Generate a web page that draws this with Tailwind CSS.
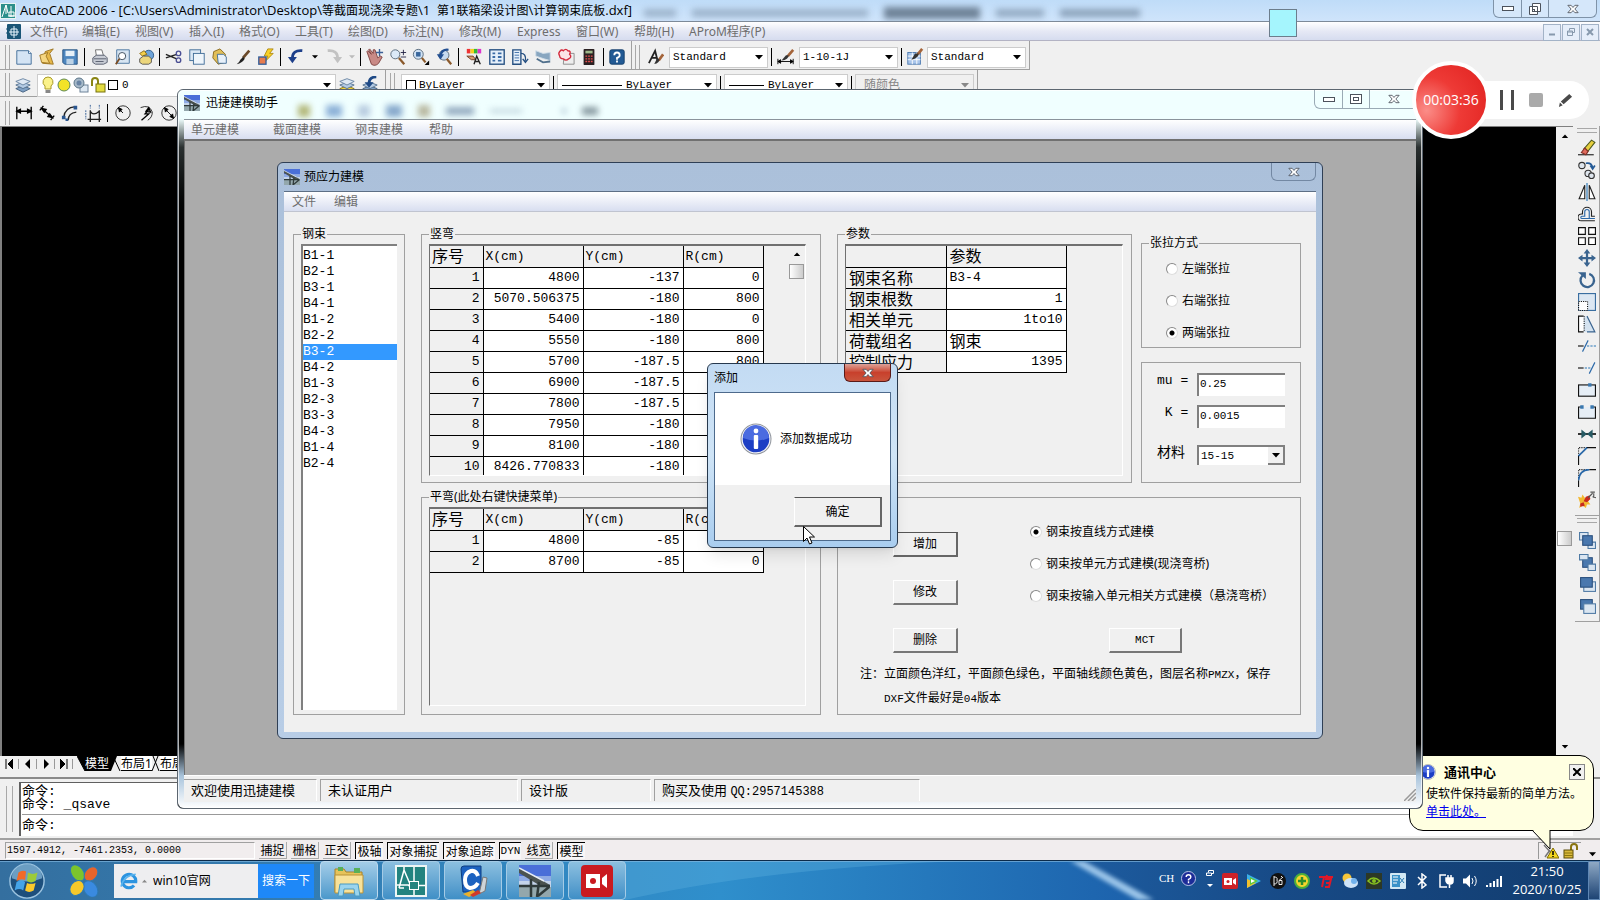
<!DOCTYPE html>
<html lang="zh-CN">
<head>
    <meta charset="UTF-8">
    <meta name="viewport" content="width=device-width, initial-scale=1.0">
    <title>AutoCAD 2006</title>
    <script src="https://cdn.jsdelivr.net/npm/@tailwindcss/browser@4"></script>
</head>
<body class="relative flex flex-col h-screen overflow-hidden bg-[#f0f0f0] text-black text-xs font-['Noto_Sans','Noto_Sans_CJK_SC',sans-serif]">

    <!-- Shared symbols -->
    <svg class="hidden">
        <symbol id="bridge" viewBox="0 0 32 32"><rect width="32" height="32" fill="#c3d3ea"/><rect width="32" height="11" fill="#4a6fd8"/><rect y="11" width="32" height="5" fill="#8fabe4"/><rect y="22" width="32" height="10" fill="#93a7ac"/><path d="M0 3 L24 16 L31 20 L31 23 L20 20 L0 8Z" fill="#4b5350"/><path d="M0 3 L25 16" stroke="#e8eef5" stroke-width="1.5"/><path d="M0 21H31M12 14V32M20 17L18 32M30 22L19 31" stroke="#2f3a3a" stroke-width="2.5" fill="none"/></symbol>
        <symbol id="down" viewBox="0 0 8 5"><path d="M0 0H8L4 4.5Z" fill="currentColor"/></symbol>
        <symbol id="info" viewBox="0 0 32 32"><circle cx="16" cy="16" r="15.5" fill="#8f949c"/><circle cx="16" cy="16" r="14.5" fill="#f4f4f8"/><circle cx="16" cy="16" r="13.3" fill="#1c3ec4"/><path d="M3 15a13 13 0 0 1 26 0Q16 20 3 15Z" fill="#4a6be0"/><circle cx="16" cy="8" r="2.4" fill="#fff"/><rect x="13.8" y="12" width="4.4" height="14" rx="1" fill="#fff"/></symbol>
        <symbol id="layers" viewBox="0 0 20 20"><path d="M2 14l8-3 8 3-8 4Z" fill="#7fa0c4" stroke="#44617f"/><path d="M2 10l8-3 8 3-8 4Z" fill="#b4cbe4" stroke="#54718f"/><path d="M2 6l8-3 8 3-8 4Z" fill="#dfe9f4" stroke="#6481a0"/></symbol>
        <symbol id="closex" viewBox="0 0 14 10"><path d="M1 .7h3.8L7 3.2 9.2.7H13L9.200 5l3.8 4.300H9.200L7 6.800 4.800 9.300H1L4.800 5Z" fill="#fff" stroke="#4c525c"/></symbol>
    </svg>

    <!-- AutoCAD title bar -->
    <header class="flex items-center h-[22px] shrink-0 border-b border-[#7d8a99] bg-gradient-to-b from-[#bfdcf8] to-[#cfe4fb] overflow-hidden">
        <svg class="w-4 h-4 mr-1" viewBox="0 0 16 16"><rect width="16" height="16" fill="#e8f4f3"/><rect x="1" y="1" width="14" height="14" fill="#2b8f8b"/><path d="M2 14L6 2l2 8M6 2v9M8 13h7M11 3v11M9 9h5v4H9z" stroke="#fff" fill="none"/></svg>
        <h1 class="text-[13px] whitespace-pre font-['Open_Sans','Noto_Sans_CJK_SC',sans-serif]">AutoCAD 2006 - [C:\Users\Administrator\Desktop\<span class="text-xs">等截面现浇梁专题</span>\1  <span class="text-xs">第</span>1<span class="text-xs">联箱梁设计图</span>\<span class="text-xs">计算钢束底板</span>.dxf]</h1>
        <div class="flex items-center gap-4 ml-3 pt-1 blur-[3px]">
            <div class="w-8 h-2 bg-[#9db4cc]"></div>
            <div class="w-44 h-2 bg-[#9cb3cb]"></div>
            <div class="w-24 h-3 bg-[#6f8398]"></div>
            <div class="w-12 h-2 bg-[#93aac2]"></div>
            <div class="w-20 h-2 bg-[#8ba2ba]"></div>
        </div>
        <div class="flex self-start ml-auto mr-[3px] h-[18px] border border-t-0 border-[#7f93a8] rounded-b-md bg-[#d5e7fa]">
            <button aria-label="Minimize" class="w-7 flex items-center justify-center border-r border-[#7f93a8]"><svg class="w-3 h-[5px]" viewBox="0 0 12 5"><rect x=".5" y=".5" width="11" height="4" fill="#fff" stroke="#4c525c"/></svg></button>
            <button aria-label="Restore" class="w-[27px] flex items-center justify-center border-r border-[#7f93a8]"><svg class="w-3 h-3" viewBox="0 0 12 12"><path d="M3.500.5h8v8h-8zM.5 3.500h8v8h-8z" fill="#fff" stroke="#4c525c"/><rect x="3.500" y="6.500" width="2" height="2" stroke="#4c525c" fill="none"/></svg></button>
            <button aria-label="Close" class="w-[47px] flex items-center justify-center"><svg class="w-3 h-[10px]"><use href="#closex"/></svg></button>
        </div>
    </header>

    <!-- AutoCAD menu bar -->
    <nav class="flex items-center h-[19px] shrink-0 pl-1.5 pt-0.5 border-b border-[#b3b3c4] bg-gradient-to-b from-white via-[#e6e9f5] to-[#d6dcef] text-[#6d6d6d]">
        <svg class="w-4 h-4 mr-2" viewBox="0 0 16 16"><rect x="1" width="14" height="15" rx="1" fill="#1a5577"/><path d="M8 2v12M3 8h10M5 5h6v6H5z" stroke="#e8f6ff" fill="none"/><path d="M0 5h3M0 9h3" stroke="#1a5577"/></svg>
        <button class="w-[52px] text-left">文件(F)</button>
        <button class="w-[53px] text-left">编辑(E)</button>
        <button class="w-[54px] text-left">视图(V)</button>
        <button class="w-[50px] text-left">插入(I)</button>
        <button class="w-[56px] text-left">格式(O)</button>
        <button class="w-[53px] text-left">工具(T)</button>
        <button class="w-[55px] text-left">绘图(D)</button>
        <button class="w-[56px] text-left">标注(N)</button>
        <button class="w-[58px] text-left">修改(M)</button>
        <button class="w-[59px] text-left">Express</button>
        <button class="w-[58px] text-left">窗口(W)</button>
        <button class="w-[55px] text-left">帮助(H)</button>
        <button class="text-left">AProM程序(P)</button>
        <div class="flex gap-px ml-auto pr-px">
            <button aria-label="Minimize drawing" class="w-[18px] h-[17px] border border-[#a3b3c7] bg-[#e6eefa] flex items-center justify-center"><svg class="w-2 h-2" viewBox="0 0 8 8"><path d="M1 6.500h6" stroke="#8799ad" stroke-width="2"/></svg></button>
            <button aria-label="Restore drawing" class="w-[18px] h-[17px] border border-[#a3b3c7] bg-[#e6eefa] flex items-center justify-center"><svg class="w-2 h-2" viewBox="0 0 8 8"><path d="M2.500 2.500v-2h5v4h-2M.5 3h5v4.500h-5zM.5 4h5" stroke="#8799ad" fill="none"/></svg></button>
            <button aria-label="Close drawing" class="w-[18px] h-[17px] border border-[#a3b3c7] bg-[#e6eefa] flex items-center justify-center"><svg class="w-2 h-2" viewBox="0 0 8 8"><path d="M1 1l6 6M7 1L1 7" stroke="#8799ad" stroke-width="2"/></svg></button>
        </div>
    </nav>

    <!-- Toolbar row 1 -->
    <div class="flex h-[29px] shrink-0">
        <div class="flex items-center w-[632px] pl-[5px] pt-1 border-r border-b border-[#a0a0a0]">
            <div class="w-[5px] h-6 mr-0.5 border-x border-[#a8a8a8]"></div>
            <button aria-label="New" class="w-[23px] flex justify-center"><svg class="w-[18px] h-[18px]" viewBox="0 0 20 20"><path d="M2 3h13l3 3v12H2z" fill="#d4e4f4" stroke="#3c6a96"/><path d="M15 3v3h3" fill="#fff" stroke="#3c6a96"/></svg></button>
            <button aria-label="Open" class="w-[23px] flex justify-center"><svg class="w-[18px] h-[18px]" viewBox="0 0 20 20"><path d="M8 4l9-3-4 5 4 12-12-1Z" fill="#e6b84a" stroke="#9c7420"/><path d="M2 8l9-3-2 4 4 8-9-1Z" fill="#f5d681" stroke="#9c7420"/></svg></button>
            <button aria-label="Save" class="w-[23px] flex justify-center"><svg class="w-[18px] h-[18px]" viewBox="0 0 20 20"><path d="M2 2h16v16H4l-2-2z" fill="#4d86bf" stroke="#24517f"/><rect x="5" y="3" width="10" height="6" fill="#e6f0f8"/><rect x="6" y="12" width="8" height="6" fill="#bcd2e6"/></svg></button>
            <div class="w-px h-[18px] mx-[3px] bg-black"></div>
            <button aria-label="Print" class="w-[23px] flex justify-center"><svg class="w-[18px] h-[18px]" viewBox="0 0 20 20"><path d="M5 2h7l2 7H6z" fill="#fff" stroke="#666"/><path d="M2 11l4-3h9l3 3v5l-4 2H5l-3-2z" fill="#c8ccd4" stroke="#555b6b"/><path d="M3 12h14M5 15h9" stroke="#555b6b"/></svg></button>
            <button aria-label="Preview" class="w-[23px] flex justify-center"><svg class="w-[18px] h-[18px]" viewBox="0 0 20 20"><path d="M3 2h14v15H3z" fill="#d7e5f2" stroke="#46739e"/><circle cx="9" cy="9" r="4" fill="#fff" stroke="#345"/><path d="M6 12l-4 6" stroke="#7a4a20" stroke-width="2"/></svg></button>
            <button aria-label="Publish" class="w-[23px] flex justify-center"><svg class="w-[18px] h-[18px]" viewBox="0 0 20 20"><circle cx="13" cy="8" r="5.500" fill="#6ea3d8" stroke="#2c5a88"/><path d="M3 6l5-3 3 4-5 2z" fill="#f3cf4b" stroke="#8a6a10"/><path d="M3 12l4-3h6l3 3v4l-3 2H6l-3-2z" fill="#ecd67c" stroke="#555"/></svg></button>
            <div class="w-px h-[18px] mx-[2px] bg-black"></div>
            <button aria-label="Cut" class="w-[23px] flex justify-center"><svg class="w-[18px] h-[18px]" viewBox="0 0 20 20"><path d="M1 7l12 5M1 11l12-4" stroke="#222" stroke-width="1.500"/><circle cx="15" cy="6" r="2.500" fill="none" stroke="#4a4f94" stroke-width="1.500"/><circle cx="15" cy="13.500" r="2.500" fill="none" stroke="#4a4f94" stroke-width="1.500"/></svg></button>
            <button aria-label="Copy" class="w-[23px] flex justify-center"><svg class="w-[18px] h-[18px]" viewBox="0 0 20 20"><rect x="2" y="2" width="12" height="12" fill="#dbe8f5" stroke="#3c6a96"/><rect x="6" y="6" width="12" height="12" fill="#eef5fb" stroke="#3c6a96"/></svg></button>
            <button aria-label="Paste" class="w-[23px] flex justify-center"><svg class="w-[18px] h-[18px]" viewBox="0 0 20 20"><path d="M3 4l7-3 6 6-1 9-7 2-6-7z" fill="#e2bf58" stroke="#86651a"/><path d="M7 7h7l3 3v7H8z" fill="#e7f0fa" stroke="#3c6a96"/></svg></button>
            <button aria-label="Brush" class="w-[23px] flex justify-center"><svg class="w-[18px] h-[18px]" viewBox="0 0 20 20"><path d="M17 3l-7 8" stroke="#6b4a2a" stroke-width="3"/><path d="M10 10l2 2q-3 5-9 6 3-2 4-5z" fill="#222"/></svg></button>
            <button aria-label="Match" class="w-[23px] flex justify-center"><svg class="w-[18px] h-[18px]" viewBox="0 0 20 20"><path d="M12 1l-4 8h4l-3 6 9-9h-4l4-5z" fill="#f8d027" stroke="#b08a10"/><rect x="2" y="10" width="8" height="8" fill="#e77c4e" stroke="#34609c" stroke-width="1.500"/></svg></button>
            <div class="w-px h-[18px] mx-[3px] bg-black"></div>
            <button aria-label="Undo" class="w-[23px] flex justify-center"><svg class="w-[18px] h-[18px]" viewBox="0 0 20 20"><path d="M17 3Q6 2 6 11" stroke="#1d3f8a" stroke-width="3" fill="none"/><path d="M1 10h10l-5 7z" fill="#1d3f8a"/></svg></button>
            <button aria-label="Undo list" class="w-[15px] flex justify-center"><svg class="w-1.5 h-1"><use href="#down"/></svg></button>
            <button aria-label="Redo" class="w-[23px] flex justify-center"><svg class="w-[18px] h-[18px]" viewBox="0 0 20 20"><path d="M3 3q11-1 11 8" stroke="#c2c2c2" stroke-width="3" fill="none"/><path d="M9 10h10l-5 7z" fill="#c2c2c2"/></svg></button>
            <button aria-label="Redo list" class="w-[13px] flex justify-center text-[#bbb]"><svg class="w-1.5 h-1"><use href="#down"/></svg></button>
            <div class="w-px h-[18px] mx-[2px] bg-black"></div>
            <button aria-label="Pan" class="w-[23px] flex justify-center"><svg class="w-[18px] h-[18px]" viewBox="0 0 20 20"><path d="M1 4l1-1 4 4-3-5 1-1 4 5 0-4 2 0 2 6 1 3 3-2 2 1-4 7q-4 4-8 1z" fill="#c98a86" stroke="#7c3e3c"/><path d="M15 1v8M11 5h8" stroke="#3c5f96" stroke-width="1.500"/></svg></button>
            <button aria-label="Zoom realtime" class="w-[23px] flex justify-center"><svg class="w-[18px] h-[18px]" viewBox="0 0 20 20"><circle cx="7" cy="7" r="5" fill="#dbe9f7" stroke="#567"/><path d="M11 11l6 7" stroke="#8b5a2c" stroke-width="2.500"/><path d="M13 5h6M16 2v6M13 10h6" stroke="#224"/></svg></button>
            <button aria-label="Zoom window" class="w-[23px] flex justify-center"><svg class="w-[18px] h-[18px]" viewBox="0 0 20 20"><circle cx="7" cy="7" r="5.500" fill="#cfe1f4" stroke="#567"/><rect x="4.500" y="4.500" width="5" height="5" fill="#38669c"/><path d="M11 11l4 5" stroke="#8b5a2c" stroke-width="2.500"/><path d="M19 14v5h-5z"/></svg></button>
            <button aria-label="Zoom previous" class="w-[23px] flex justify-center"><svg class="w-[18px] h-[18px]" viewBox="0 0 20 20"><circle cx="10" cy="8" r="5.500" fill="#c6daf0" stroke="#567"/><path d="M15 2Q8 1 6 8" stroke="#224f92" stroke-width="2.500" fill="none"/><path d="M2 7h8l-4 6z" fill="#224f92"/><path d="M13 12l5 6" stroke="#8b5a2c" stroke-width="2.500"/></svg></button>
            <div class="w-px h-[18px] mx-[3px] bg-black"></div>
            <button aria-label="Properties" class="w-[23px] flex justify-center"><svg class="w-[18px] h-[18px]" viewBox="0 0 20 20"><rect x="2" y="1" width="4" height="5" fill="#e33"/><rect x="6" y="1" width="4" height="5" fill="#f4d020"/><rect x="10" y="1" width="4" height="5" fill="#3b3"/><rect x="14" y="1" width="4" height="5" fill="#d3c"/><path d="M2 9l7 0 3 4-5 0z" fill="#d69a72" stroke="#6c3c22"/><path d="M10 18l3-9 4 9M11 15h5" stroke="#222" fill="none" stroke-width="1.500"/></svg></button>
            <button aria-label="DesignCenter" class="w-[23px] flex justify-center"><svg class="w-[18px] h-[18px]" viewBox="0 0 20 20"><rect x="2" y="2" width="16" height="16" fill="#e6f0fa" stroke="#244e80" stroke-width="1.500"/><path d="M5 5h3v2H5zM5 9h3v2H5zM5 13h3v2H5zM11 5h4v2h-4zM11 9h4v2h-4zM11 13h4v2h-4z" fill="#3a6ba6"/></svg></button>
            <button aria-label="Tool palettes" class="w-[23px] flex justify-center"><svg class="w-[18px] h-[18px]" viewBox="0 0 20 20"><path d="M2 2h9v16H2z" fill="#e6f0fa" stroke="#244e80" stroke-width="1.500"/><path d="M4 5h5M4 8h5M4 11h5M4 14h5" stroke="#3a6ba6"/><path d="M11 6q6 0 5 8M13 12l3 4 3-4" stroke="#244e80" fill="none" stroke-width="1.500"/></svg></button>
            <button aria-label="Sheet sets" class="w-[23px] flex justify-center"><svg class="w-[18px] h-[18px]" viewBox="0 0 20 20"><path d="M2 3l8 3 8-1v9l-7-2-9-3z" fill="#88a6c0" stroke="#cfdde8"/><path d="M3 12l7 4 8-1" stroke="#51708c" stroke-width="2" fill="none"/></svg></button>
            <button aria-label="Markup" class="w-[23px] flex justify-center"><svg class="w-[18px] h-[18px]" viewBox="0 0 20 20"><path d="M8 6h11v12H7z" fill="#eee" stroke="#888"/><path d="M3 4q2-3 4-1 3-3 5 0 4 0 2 4 3 3-1 5-3 3-6 0-4 0-4-3-2-3 0-5z" fill="#fbe4e6" stroke="#d42a3c" stroke-width="1.500"/></svg></button>
            <button aria-label="Calculator" class="w-[23px] flex justify-center"><svg class="w-[18px] h-[18px]" viewBox="0 0 20 20"><rect x="4" y="1" width="12" height="18" rx="1" fill="#2a2022"/><rect x="6" y="3" width="8" height="3" fill="#9fb88a"/><path d="M6 9h2M9 9h2M12 9h2M6 12h2M9 12h2M12 12h2M6 15h2M9 15h2M12 15h2" stroke="#e85050" stroke-width="1.500"/></svg></button>
            <div class="w-px h-[18px] mx-[3px] bg-black"></div>
            <button aria-label="Help" class="w-[20px] flex justify-center"><svg class="w-[18px] h-[18px]" viewBox="0 0 20 20"><rect x="2" y="2" width="16" height="16" rx="2" fill="#225a94" stroke="#123c68"/><path d="M7 8q0-3 3-3t3 3q0 2-3 3v2M10 14v2" stroke="#fff" stroke-width="2" fill="none"/></svg></button>
        </div>
        <div class="flex items-center w-[398px] pl-[3px] pt-1 border-r border-b border-[#a0a0a0]">
            <div class="w-[5px] h-6 mr-2 border-x border-[#a8a8a8]"></div>
            <svg class="w-4 h-[18px] mr-[5px]" viewBox="0 0 18 20"><path d="M1 17L8 3l3 12M4 11h6" stroke="#222" stroke-width="2" fill="none"/><path d="M17 7l-5 7" stroke="#a4643a" stroke-width="3"/><path d="M13 12q0 5-6 6l3-6z" fill="#333"/></svg>
            <label class="flex items-center w-[99px] h-[21px] bg-white border border-[#ccc]"><select aria-label="Text style" class="appearance-none flex-1 min-w-0 pl-[3px] text-[11px] font-['Liberation_Mono',monospace]"><option>Standard</option></select><svg class="w-2 h-[5px] mr-1"><use href="#down"/></svg></label>
            <div class="w-px h-[18px] mx-[3px] bg-black"></div>
            <svg class="w-[18px] h-[18px] ml-0.5 mr-1" viewBox="0 0 20 20"><path d="M1 12v6M18 12v6M1 15h17M1 15l3-2v4zM18 15l-3-2v4z" stroke="#000"/><path d="M18 2l-6 7" stroke="#a4643a" stroke-width="3"/><path d="M13 8q0 5-8 6l5-6z" fill="#333"/></svg>
            <label class="flex items-center w-[99px] h-[21px] bg-white border border-[#ccc]"><select aria-label="Dimension style" class="appearance-none flex-1 min-w-0 pl-[3px] text-[11px] font-['Liberation_Mono',monospace]"><option>1-10-1J</option></select><svg class="w-2 h-[5px] mr-1"><use href="#down"/></svg></label>
            <div class="w-px h-[18px] mx-[3px] bg-black"></div>
            <svg class="w-[18px] h-[18px] ml-px mr-[3px]" viewBox="0 0 20 20"><rect x="2" y="5" width="14" height="13" fill="#a9c5ea" stroke="#4a78ae"/><path d="M2 9h14M2 13h14M7 5v13M12 5v13" stroke="#fff"/><path d="M18 1l-5 6" stroke="#a4643a" stroke-width="3"/><path d="M14 6q0 5-8 7l4-7z" fill="#333"/></svg>
            <label class="flex items-center w-[99px] h-[21px] bg-white border border-[#ccc]"><select aria-label="Table style" class="appearance-none flex-1 min-w-0 pl-[3px] text-[11px] font-['Liberation_Mono',monospace]"><option>Standard</option></select><svg class="w-2 h-[5px] mr-1"><use href="#down"/></svg></label>
        </div>
    </div>

    <!-- Toolbar row 2 -->
    <div class="flex h-[27px] shrink-0">
        <div class="flex items-center w-[386px] pl-[5px] pt-1 border-r border-b border-[#a0a0a0]">
            <div class="w-[5px] h-6 mr-1 border-x border-[#a8a8a8]"></div>
            <svg class="w-[18px] h-[18px] mr-[5px]"><use href="#layers"/></svg>
            <label class="flex items-center w-[299px] h-[23px] pl-0.5 bg-white border border-[#ccc]">
                <svg class="w-4 h-[18px]" viewBox="0 0 16 18"><path d="M8 1a5 5 0 0 1 3 9v3H5v-3a5 5 0 0 1 3-9z" fill="#fbf28a" stroke="#a99b28"/><path d="M5.500 14h5v3h-5z" fill="#888"/></svg>
                <svg class="w-4 h-4" viewBox="0 0 16 16"><circle cx="8" cy="8" r="6" fill="#f2e328" stroke="#5e8a56"/></svg>
                <svg class="w-4 h-4 mx-px" viewBox="0 0 16 16"><rect x="7" y="8" width="8" height="7" fill="#dde8f2" stroke="#6c8298"/><circle cx="6" cy="6" r="5" fill="#a6b9c9" stroke="#5d7688"/><circle cx="6" cy="6" r="2.500" fill="#6884a4"/></svg>
                <svg class="w-4 h-4" viewBox="0 0 16 16"><path d="M2 9V4q0-3 3-3t3 3v3" stroke="#8a8514" stroke-width="2" fill="none"/><rect x="6" y="7" width="9" height="8" fill="#e3dc42" stroke="#77720e"/></svg>
                <span class="w-[10px] h-[10px] ml-0.5 border border-black"></span>
                <select aria-label="Layer" class="appearance-none flex-1 min-w-0 pl-1 text-[11px] font-['Liberation_Mono',monospace]"><option>0</option></select>
                <svg class="w-2 h-[5px] mr-1"><use href="#down"/></svg>
            </label>
            <svg class="w-[18px] h-[18px] ml-0.5 mr-[5px]" viewBox="0 0 20 20"><path d="M2 14l8-3 8 3-8 4Z" fill="#f0d23c" stroke="#8a7614"/><path d="M2 10l8-3 8 3-8 4Z" fill="#b4cbe4" stroke="#54718f"/><path d="M2 6l8-3 8 3-8 4Z" fill="#dfe9f4" stroke="#6481a0"/></svg>
            <svg class="w-[18px] h-[18px]" viewBox="0 0 20 20"><path d="M2 14l8-3 8 3-8 4Z" fill="#7fa0c4" stroke="#44617f"/><path d="M2 10l8-3 8 3-8 4Z" fill="#b4cbe4" stroke="#54718f"/><path d="M17 1Q9 1 9 8" stroke="#1f4a86" stroke-width="3" fill="none"/><path d="M4 7h10l-5 6z" fill="#1f4a86"/></svg>
        </div>
        <div class="flex items-center w-[592px] pl-1 pt-1 border-r border-b border-[#a0a0a0]">
            <div class="w-[5px] h-6 mr-1.5 border-x border-[#a8a8a8]"></div>
            <label class="flex items-center w-[149px] h-[23px] pl-1 bg-white border border-[#ccc]"><span class="w-[10px] h-[10px] border border-black"></span><select aria-label="Color" class="appearance-none flex-1 min-w-0 pl-[3px] text-[11px] font-['Liberation_Mono',monospace]"><option>ByLayer</option></select><svg class="w-2 h-[5px] mr-1"><use href="#down"/></svg></label>
            <div class="w-px h-[18px] mx-[3px] bg-black"></div>
            <label class="flex items-center w-[160px] h-[23px] pl-1 bg-white border border-[#ccc]"><span class="w-[60px] h-px mr-0.5 bg-black"></span><select aria-label="Linetype" class="appearance-none flex-1 min-w-0 pl-0.5 text-[11px] font-['Liberation_Mono',monospace]"><option>ByLayer</option></select><svg class="w-2 h-[5px] mr-1"><use href="#down"/></svg></label>
            <div class="w-px h-[18px] mx-[3px] bg-black"></div>
            <label class="flex items-center w-[124px] h-[23px] pl-1 bg-white border border-[#ccc]"><span class="w-[35px] h-px mr-0.5 bg-black"></span><select aria-label="Lineweight" class="appearance-none flex-1 min-w-0 pl-0.5 text-[11px] font-['Liberation_Mono',monospace]"><option>ByLayer</option></select><svg class="w-2 h-[5px] mr-1"><use href="#down"/></svg></label>
            <div class="w-px h-[18px] mx-[3px] bg-black"></div>
            <label class="flex items-center w-[119px] h-[23px] border border-[#ccc] text-[#888]"><select disabled aria-label="Plot style" class="appearance-none flex-1 min-w-0 pl-2"><option>随颜色</option></select><svg class="w-2 h-[5px] mr-1"><use href="#down"/></svg></label>
        </div>
    </div>

    <!-- Toolbar row 3: dimensions -->
    <div class="flex items-center h-[29px] shrink-0 pl-[5px] pt-0.5">
        <div class="w-[5px] h-6 mr-0.5 border-x border-[#a8a8a8]"></div>
        <button aria-label="Linear" class="w-[23px] flex justify-center"><svg class="w-[18px] h-[18px]" viewBox="0 0 20 20"><path d="M2 3v14M18 3v14M2 8h16M2 8l4-2v4zM18 8l-4-2v4z" stroke="#000" stroke-width="1.500"/></svg></button>
        <button aria-label="Aligned" class="w-[23px] flex justify-center"><svg class="w-[18px] h-[18px]" viewBox="0 0 20 20"><path d="M6 2L2 7M18 13l-4 5M4 5l12 10M4 5l5 1-2 3zM16 15l-5-1 2-3z" stroke="#000" stroke-width="1.500"/></svg></button>
        <button aria-label="Arc length" class="w-[23px] flex justify-center"><svg class="w-[18px] h-[18px]" viewBox="0 0 20 20"><path d="M3 15Q4 4 16 3M8 18q0-8 9-9" stroke="#222" stroke-width="1.500" fill="none"/><path d="M1 13h4v4H1zM14 2h4v4h-4zM5 16h3v3H5z" fill="#2a5690"/></svg></button>
        <button aria-label="Ordinate" class="w-[23px] flex justify-center"><svg class="w-[18px] h-[18px]" viewBox="0 0 20 20"><path d="M7 7v10h10V7M4 17h15M7 8q3 6 10 0M17 17v3M7 17v3" stroke="#222" fill="none" stroke-width="1.500"/><path d="M2 7v10M7 1v4M17 1v4" stroke="#2a5690" stroke-dasharray="2 1"/></svg></button>
        <div class="w-px h-[18px] mx-[3px] bg-black"></div>
        <button aria-label="Radius" class="w-[23px] flex justify-center"><svg class="w-[18px] h-[18px]" viewBox="0 0 20 20"><circle cx="10" cy="10" r="8" fill="none" stroke="#222"/><path d="M10 10L5 5M5 4l4 2-3 3z" stroke="#000"/></svg></button>
        <button aria-label="Jogged" class="w-[23px] flex justify-center"><svg class="w-[18px] h-[18px]" viewBox="0 0 20 20"><path d="M4 4q10-4 13 5 0 6-5 9" stroke="#222" fill="none"/><path d="M14 5L9 11h4l-8 7M13 4l2 5-5-1z" stroke="#000" fill="none" stroke-width="1.500"/></svg></button>
        <button aria-label="Diameter" class="w-[23px] flex justify-center"><svg class="w-[18px] h-[18px]" viewBox="0 0 20 20"><circle cx="10" cy="10" r="8" fill="none" stroke="#222"/><path d="M5 5l10 10M5 4l4 2-3 3zM15 16l-4-2 3-3z" stroke="#000"/></svg></button>
    </div>

    <!-- Drawing area -->
    <main class="flex flex-1 min-h-0">
        <div class="flex flex-col flex-1">
            <div class="flex flex-1 border-t border-l-2 border-[#808080]">
                <div class="flex-1 bg-black"></div>
                <div class="flex flex-col w-[17px] items-center py-[7px]">
                    <svg class="w-2 h-1 rotate-180"><use href="#down"/></svg>
                    <div class="flex-1"></div>
                    <div class="w-[15px] h-[15px] border border-[#999] bg-gradient-to-r from-white to-[#ccc]"></div>
                    <div class="h-[199px]"></div>
                    <svg class="w-2 h-1"><use href="#down"/></svg>
                </div>
            </div>
            <div class="flex items-center h-[15px] mb-1.5">
                <button aria-label="First" class="w-[19px] flex justify-center border-r border-[#999]"><svg class="w-2 h-[10px]" viewBox="0 0 8 10"><path d="M1 0v10M8 0v10L3 5z" stroke="#000"/></svg></button>
                <button aria-label="Previous" class="w-[18px] flex justify-center border-r border-[#999]"><svg class="w-2 h-[10px]" viewBox="0 0 8 10"><path d="M6 0v10L1 5z"/></svg></button>
                <button aria-label="Next" class="w-[18px] flex justify-center border-r border-[#999]"><svg class="w-2 h-[10px]" viewBox="0 0 8 10"><path d="M2 0v10l5-5z"/></svg></button>
                <button aria-label="Last" class="w-[18px] flex justify-center border-r border-[#999]"><svg class="w-2 h-[10px]" viewBox="0 0 8 10"><path d="M7 0v10M0 0v10l5-5z" stroke="#000"/></svg></button>
                <svg class="w-2 h-[15px] ml-1" viewBox="0 0 8 15"><path d="M0 0h8v15z"/><path d="M0 0l8 15" stroke="#000"/></svg>
                <button class="h-[15px] leading-[14px] bg-black text-white">模型</button>
                <svg class="w-3 h-[15px]" viewBox="0 0 12 15"><path d="M0 0h8L2 15H0z"/><path d="M4 0l7 15" stroke="#000" fill="none"/></svg>
                <button class="h-[15px] leading-[13px] bg-white border-b border-black">布局1</button>
                <svg class="w-2 h-[15px]" viewBox="0 0 8 15"><path d="M0 15L6 0M1 0l6 15" stroke="#000" fill="none"/></svg>
                <button class="h-[15px] leading-[13px] bg-white border-b border-black">布局2</button>
            </div>
        </div>
        <aside class="w-[27px] pl-0.5">
            <div class="flex flex-col items-center h-[390px] border-r border-b border-[#a0a0a0]">
                <div class="w-5 h-[5px] mt-0.5 mb-1 border-y border-[#a8a8a8]"></div>
                <button aria-label="Erase" class="h-[22px]"><svg class="w-[18px] h-[18px]" viewBox="0 0 16 16"><path d="M0 14h14" stroke="#222"/><path d="M12 1l3 2-7 9-3-3z" fill="#e7cf3e" stroke="#4c5a20"/><path d="M6 8l3 3-2 3-4-2z" fill="#e06a5c" stroke="#803028"/></svg></button>
                <button aria-label="Copy object" class="h-[22px]"><svg class="w-[18px] h-[18px]" viewBox="0 0 16 16"><g fill="#dfe6ee" stroke="#333"><circle cx="3.500" cy="4" r="2.800"/><circle cx="9" cy="11" r="2.800"/><circle cx="12" cy="13" r="2.500"/></g><path d="M7 2q5-1 6 4M11 4l2 3 2-3" stroke="#245a96" fill="none" stroke-width="1.500"/></svg></button>
                <button aria-label="Mirror" class="h-[22px]"><svg class="w-[18px] h-[18px]" viewBox="0 0 16 16"><path d="M6 2v12H1zM10 2v12h5z" fill="#fff" stroke="#222"/><path d="M8 0v16" stroke="#2a78b8"/></svg></button>
                <button aria-label="Offset" class="h-[22px]"><svg class="w-[18px] h-[18px]" viewBox="0 0 16 16"><path d="M15 14H3a3 3 0 0 1 0-6h1V6a4 4 0 0 1 8 0v4h3" fill="none" stroke="#222"/><path d="M15 12H3.500a1 1 0 0 1 0-2H6V6a2 2 0 0 1 4 0v6" fill="none" stroke="#2a68a8"/></svg></button>
                <button aria-label="Array" class="h-[22px]"><svg class="w-[18px] h-[18px]" viewBox="0 0 16 16"><path d="M.5.5h6v6h-6zM9.500.5h6v6h-6zM.5 9.500h6v6h-6zM9.500 9.500h6v6h-6z" fill="#fff" stroke="#111"/></svg></button>
                <button aria-label="Move" class="h-[22px]"><svg class="w-[18px] h-[18px]" viewBox="0 0 16 16"><path d="M8 2v12M2 8h12" stroke="#3a648f" stroke-width="2"/><path d="M8 0l3 4H5zM8 16l3-4H5zM0 8l4-3v6zM16 8l-4-3v6z" fill="#3a648f"/></svg></button>
                <button aria-label="Rotate" class="h-[22px]"><svg class="w-[18px] h-[18px]" viewBox="0 0 16 16"><path d="M4 4A6 6 0 1 0 10 2.500" stroke="#3a648f" stroke-width="2" fill="none"/><path d="M0 1h7v6z" fill="#3a648f"/></svg></button>
                <button aria-label="Scale" class="h-[22px]"><svg class="w-[18px] h-[18px]" viewBox="0 0 16 16"><rect x=".5" y=".5" width="15" height="15" fill="#dce7f2" stroke="#3a6ea0"/><rect x=".5" y="7.500" width="8" height="8" fill="#fff" stroke="#111" stroke-dasharray="1 1"/></svg></button>
                <button aria-label="Stretch" class="h-[22px]"><svg class="w-[18px] h-[18px]" viewBox="0 0 16 16"><path d="M8 1l7 14H5V1z" fill="#d5e3f0"/><path d="M5 1H.5v14H5" fill="#fff" stroke="#111"/><path d="M5.500 1v14" stroke="#111" stroke-dasharray="1 1"/><path d="M8 1l7 14H8" stroke="#3a648f" fill="none"/></svg></button>
                <button aria-label="Trim" class="h-[22px]"><svg class="w-[18px] h-[18px]" viewBox="0 0 16 16"><path d="M0 8h5" stroke="#111"/><path d="M8 8h8" stroke="#2a78b8" stroke-dasharray="2 1"/><path d="M4 13L9 3" stroke="#2a68a8"/></svg></button>
                <button aria-label="Extend" class="h-[22px]"><svg class="w-[18px] h-[18px]" viewBox="0 0 16 16"><path d="M0 8h5" stroke="#111"/><path d="M6 8h6" stroke="#2a78b8" stroke-dasharray="2 1"/><path d="M10 13l5-10" stroke="#2a68a8"/></svg></button>
                <button aria-label="Break at point" class="h-[22px]"><svg class="w-[18px] h-[18px]" viewBox="0 0 16 16"><rect x=".5" y="3.500" width="15" height="10" fill="#e6eef6" stroke="#111"/><rect x="9" y="2" width="3" height="3" fill="#3a78b0"/></svg></button>
                <button aria-label="Break" class="h-[22px]"><svg class="w-[18px] h-[18px]" viewBox="0 0 16 16"><path d="M3 3.500H.5v10h15v-10H13" fill="#e6eef6" stroke="#111"/><path d="M2 2h3v3H2zM11 2h3v3h-3z" fill="#3a78b0"/></svg></button>
                <button aria-label="Join" class="h-[22px]"><svg class="w-[18px] h-[18px]" viewBox="0 0 16 16"><path d="M0 8h16" stroke="#111" stroke-width="1.500"/><path d="M3 4l5 4-5 4zM13 4L8 8l5 4z" fill="#265a64"/></svg></button>
                <button aria-label="Chamfer" class="h-[22px]"><svg class="w-[18px] h-[18px]" viewBox="0 0 16 16"><path d="M.5 16V8M8 .5h8" stroke="#111"/><path d="M.5 8V.5H8" stroke="#111" stroke-dasharray="1 1" fill="none"/><path d="M.5 8L8 .5" stroke="#2a68a8" stroke-width="1.500"/></svg></button>
                <button aria-label="Fillet" class="h-[22px]"><svg class="w-[18px] h-[18px]" viewBox="0 0 16 16"><path d="M.5 16v-6M10 .5h6" stroke="#111"/><path d="M.5 8V.5H8" stroke="#111" stroke-dasharray="1 1" fill="none"/><path d="M.5 10Q1 1 10 .5" stroke="#2a68a8" stroke-width="1.500" fill="none"/></svg></button>
                <button aria-label="Explode" class="h-[22px]"><svg class="w-[18px] h-[18px]" viewBox="0 0 16 16"><path d="M0 5l3 1 1-3 2 3 5 0-2 3 2 3-3 0-1 3-3-2-3 2 1-4z" fill="#f2b830"/><path d="M7 5l3-1 1 3-3 3-3-1zM2 11l3-1 1 3-4 1z" fill="#c8281e"/><path d="M9 6l4-4M11 1l4 0M13 5l3 1M14 2v4" stroke="#555"/></svg></button>
            </div>
            <div class="flex flex-col items-center h-[106px] border-r border-b border-[#a0a0a0]">
                <div class="w-5 h-[5px] mt-0.5 mb-1.5 border-y border-[#a8a8a8]"></div>
                <button aria-label="Bring to front" class="h-[22px]"><svg class="w-[17px] h-[17px]" viewBox="0 0 16 16"><path d="M.5.5h8v7h-8zM8.500 9.500h7v6h-7z" fill="#dbe6f1" stroke="#4f7aa4"/><rect x="3.500" y="3.500" width="9" height="9" fill="#4a78ae" stroke="#284e7c"/></svg></button>
                <button aria-label="Send to back" class="h-[22px]"><svg class="w-[17px] h-[17px]" viewBox="0 0 16 16"><rect x="3.500" y="3.500" width="9" height="9" fill="#4a78ae" stroke="#284e7c"/><path d="M.5.5h8v5h-8zM8.500 9.500h7v6h-7z" fill="#dbe6f1" stroke="#4f7aa4"/></svg></button>
                <button aria-label="Bring above" class="h-[22px]"><svg class="w-[17px] h-[17px]" viewBox="0 0 16 16"><rect x="4.500" y="5.500" width="11" height="9" fill="#dbe6f1" stroke="#4f7aa4"/><rect x="1.500" y="1.500" width="11" height="9" fill="#4a78ae" stroke="#284e7c"/></svg></button>
                <button aria-label="Send under" class="h-[22px]"><svg class="w-[17px] h-[17px]" viewBox="0 0 16 16"><rect x="1.500" y="1.500" width="11" height="9" fill="#4a78ae" stroke="#284e7c"/><rect x="4.500" y="5.500" width="11" height="9" fill="#dbe6f1" stroke="#4f7aa4"/></svg></button>
            </div>
        </aside>
    </main>

    <!-- Command window -->
    <section class="flex h-[61px] shrink-0 pt-[3px] pb-0.5 border-t-2 border-[#8a8a8a]">
        <div class="w-[7px] mx-1.5 my-1 border-x border-[#a8a8a8] shrink-0"></div>
        <div class="flex flex-col flex-1 pl-px border-l-2 border-t border-[#606060] bg-white text-[13px] leading-[13px] whitespace-pre font-['Liberation_Mono','Noto_Sans_CJK_SC',monospace]">
            <p class="mt-0.5">命令:</p>
            <p>命令: _qsave</p>
            <label class="flex mt-auto pt-1 pb-px border-t border-[#999]">命令:<input type="text" class="flex-1 h-4 outline-none"></label>
        </div>
        <div class="w-[27px]"></div>
    </section>

    <!-- AutoCAD status bar -->
    <footer class="flex items-center h-[22px] shrink-0 pl-[5px] pt-px border-t-2 border-[#a0a0a0] bg-[#f1edee]">
        <div class="w-[250px] h-[17px] pl-px mr-1 border border-[#a0a0a0] border-r-white border-b-white text-[10px] leading-[16px] font-['Liberation_Mono',monospace]">1597.4912, -7461.2353, 0.0000</div>
        <div class="flex gap-1 leading-[15px] text-xs">
            <button class="w-7 h-[17px] border-r border-b border-[#aaa]">捕捉</button>
            <button class="w-7 h-[17px] border-r border-b border-[#aaa]">栅格</button>
            <button class="w-7 h-[17px] border-r border-b border-[#aaa]">正交</button>
            <button class="w-7 h-[17px] border-l border-t border-black bg-[#f8f6f7]">极轴</button>
            <button class="w-[52px] h-[17px] border-l border-t border-black bg-[#f8f6f7]">对象捕捉</button>
            <button class="w-[52px] h-[17px] border-l border-t border-black bg-[#f8f6f7]">对象追踪</button>
            <button class="w-[22px] h-[17px] border-l border-t border-black bg-[#f8f6f7] text-[11px] font-['Liberation_Mono',monospace]">DYN</button>
            <button class="w-7 h-[17px] border-r border-b border-[#aaa]">线宽</button>
            <button class="w-7 h-[17px] border-l border-t border-black bg-[#f8f6f7]">模型</button>
        </div>
        <div class="flex items-center gap-2 ml-auto mr-1">
            <div class="flex gap-1 w-[43px] pl-1 border-l border-t border-[#999]">
                <svg class="w-4 h-4" viewBox="0 0 16 16"><path d="M1 2l8 9M2 14l5-7" stroke="#777" stroke-width="1.500"/><path d="M10 5l6 10H4z" fill="#f4d820" stroke="#806c00"/><path d="M10 8v4M10 13v1" stroke="#000" stroke-width="1.500"/></svg>
                <svg class="w-4 h-4" viewBox="0 0 16 16"><path d="M8 7V4q0-3 3-3t3 3v3" stroke="#8a7410" stroke-width="2" fill="none"/><rect x="1" y="7" width="9" height="8" fill="#d8b83a" stroke="#5c4c08"/><path d="M1 10h9M1 12.500h9" stroke="#8a7410"/></svg>
            </div>
            <svg class="w-[7px] h-[5px] mt-2"><use href="#down"/></svg>
        </div>
    </footer>

    <!-- Taskbar -->
    <footer class="relative flex items-center h-10 shrink-0 border-t border-[#0c2b4a] bg-gradient-to-r from-[#346f9f] from-0% via-[#2f8fcc] via-45% to-[#1d63ad] to-70%">
        <svg class="absolute inset-0 w-full h-full" viewBox="0 0 1600 39" preserveAspectRatio="none">
            <defs><linearGradient id="dark" x1="0" x2="1"><stop offset="0" stop-color="#1d5ca0"/><stop offset=".4" stop-color="#174a86"/><stop offset="1" stop-color="#123c6e"/></linearGradient></defs>
            <path d="M1076 0H1600V39H1144Z" fill="url(#dark)"/>
            <path d="M1070 0h14L1154 39h-16Z" fill="#9cc6ea" class="blur-[2px]"/>
            <path d="M625 39Q760 8 960 0H625Z" fill="#5fb2e0" opacity=".35"/>
            <path d="M0 .5H1600" stroke="#7fb6df" opacity=".7"/>
        </svg>
        <div class="relative flex items-center flex-1 h-full">
            <button aria-label="Start" class="w-[54px] flex justify-center"><svg class="w-[38px] h-[38px]" viewBox="0 0 40 40"><circle cx="20" cy="20" r="18" fill="#1d4f7c" stroke="#9cc4e0" stroke-width="1.500"/><path d="M4 17a16 15 0 0 1 32 0Q20 24 4 17Z" fill="#7fb1d4" opacity=".8"/><path d="M11 11q4-3 8-1l-1 9q-4-2-9 1z" fill="#f06a28"/><path d="M21 11q5 3 10 0l-2 9q-5 3-9 0z" fill="#9ccb3a"/><path d="M9 21q5-3 9 0l-2 9q-4-3-9 0z" fill="#45a4e8"/><path d="M20 22q4 2 9 0l-2 8q-5 3-9 0z" fill="#fbc92c"/></svg></button>
            <button aria-label="Browser" class="w-[60px] flex justify-center"><svg class="w-8 h-8" viewBox="0 0 32 32"><g stroke="#2c79b4"><ellipse cx="9.500" cy="8" rx="6" ry="9" transform="rotate(-35 9.500 8)" fill="#7cc42c"/><ellipse cx="23" cy="9" rx="8" ry="6" transform="rotate(-50 23 9)" fill="#e8642c"/><ellipse cx="22.500" cy="24" rx="6.500" ry="9" transform="rotate(-35 22.500 24)" fill="#3a8ae0"/><ellipse cx="9" cy="23" rx="8" ry="6.500" transform="rotate(-50 9 23)" fill="#f6c82a"/></g></svg></button>
            <form class="flex w-[200px] h-[34px] bg-[#eeeef0]">
                <div class="flex items-center pl-1.5"><svg class="w-[18px] h-[18px] mr-1" viewBox="0 0 16 16"><path d="M3 8.500h11A6 6 0 1 0 12.500 12" fill="none" stroke="#2c94e0" stroke-width="2.800"/><path d="M1 13Q3 3 14 2" stroke="#5ab4ee" stroke-width="1.500" fill="none"/></svg><svg class="w-[5px] h-[4px] mr-1 rotate-180 text-[#888]"><use href="#down"/></svg></div>
                <input type="text" aria-label="Search" value="win10官网" class="flex-1 min-w-0 pl-0.5 text-xs outline-none">
                <button type="button" class="w-14 bg-[#1e88f8] text-white">搜索一下</button>
            </form>
            <div class="flex gap-1 h-full ml-1.5">
                <button aria-label="Explorer" class="w-[58px] flex items-center justify-center border border-[#bcd9ee] rounded-sm bg-gradient-to-b from-[#a3cde8] to-[#4a98cb]"><svg class="w-8 h-8" viewBox="0 0 32 32"><path d="M2 4h9l2 3h16v20H2z" fill="#e6c35a" stroke="#a88228"/><path d="M5 2h5v4H5zM21 3h6v5h-6z" fill="#58b058"/><path d="M2 10h28v18H2z" fill="#f8e29a" stroke="#b89238"/><path d="M5 31l2-12h18l2 12h-5l-1-7H11l-1 7z" fill="#9ad4ee" stroke="#4a9ac0"/></svg></button>
                <button aria-label="AutoCAD" class="w-[58px] flex items-center justify-center border border-[#a4cbe6] rounded-sm bg-gradient-to-b from-[#8cc0e0] to-[#3f8fc6]"><svg class="w-8 h-8" viewBox="0 0 32 32"><rect width="32" height="32" fill="#eef6f5"/><rect x="2" y="2" width="28" height="28" fill="#23837f"/><path d="M4 23L9 5l6 14M4 23h5M9 5V2M15 20H2M19 17v-15M19 24v6M13 20.500h17" stroke="#fff" fill="none" stroke-width="1.500"/><rect x="14.500" y="16.500" width="9" height="8" fill="#23837f" stroke="#fff"/></svg></button>
                <button aria-label="Civil" class="w-[58px] flex items-center justify-center border border-[#a4cbe6] rounded-sm bg-gradient-to-b from-[#8cc0e0] to-[#3f8fc6]"><svg class="w-8 h-8" viewBox="0 0 32 32"><path d="M4 4q0-3 3-3h17v26H6z" fill="#1c62c0" stroke="#0d3d80"/><path d="M21 11Q19 5 14 6q-6 2-6 9t5 8q5 0 8-5" stroke="#fff" stroke-width="4" fill="none"/><path d="M26 12l4 1-2 13-6 3z" fill="#cfd4d8" stroke="#777"/><path d="M6 29l10-4 4 3-8 4z" fill="#e9b02c"/><path d="M13 30l8-5 3 3-8 4z" fill="#d03a2c"/></svg></button>
                <button aria-label="Bridge" class="w-[58px] flex items-center justify-center border border-[#a4cbe6] rounded-sm bg-gradient-to-b from-[#8cc0e0] to-[#3f8fc6]"><svg class="w-8 h-8"><use href="#bridge"/></svg></button>
                <button aria-label="Recorder" class="w-[58px] flex items-center justify-center border border-[#a4cbe6] rounded-sm bg-gradient-to-b from-[#8cc0e0] to-[#3f8fc6]"><svg class="w-8 h-8" viewBox="0 0 32 32"><rect width="32" height="32" rx="4" fill="#c91a20"/><path d="M5 9h14v14H5zM21 13l5-4v14l-5-4z" fill="#fff"/><circle cx="12" cy="16" r="3" fill="#c91a20"/></svg></button>
            </div>
            <div class="flex items-center h-full ml-auto text-white">
                <span class="w-[18px] mb-1 text-[11px] font-['Liberation_Serif',serif]">CH</span>
                <svg class="w-[15px] h-[15px] mb-1 ml-1" viewBox="0 0 16 16"><circle cx="8" cy="8" r="7.500" fill="#1c2c98" stroke="#c0c8e8"/><path d="M5.500 6.500q0-2.500 2.500-2.500t2.500 2.500q0 1.500-2.500 2.500v1M8 11v2" stroke="#fff" stroke-width="1.500" fill="none"/></svg>
                <svg class="w-2 h-5 mb-1 ml-[10px] mr-2" viewBox="0 0 8 20"><path d="M2.500 3.500v-2h5v3h-2M.5 4h5v2.500h-5z" stroke="#fff" fill="none"/><path d="M1 15h6l-3 3z" fill="#fff"/></svg>
                <div class="flex items-center gap-2">
                    <svg class="w-4 h-4" viewBox="0 0 16 16"><rect width="16" height="16" rx="2" fill="#cc2228"/><path d="M2 5h8v7H2zM11 7l3-2v7l-3-2z" fill="#fff"/><circle cx="6" cy="8.500" r="1.500" fill="#cc2228"/></svg>
                    <svg class="w-4 h-4" viewBox="0 0 16 16"><path d="M1 1l14 7-14 7z" fill="#3ab0e8"/><path d="M1 6v9l9-5z" fill="#f4c02c"/><path d="M4 4l8 4-8 4z" fill="#5cc83c"/><path d="M5 6l4 2-4 2z" fill="#fff"/></svg>
                    <svg class="w-4 h-4" viewBox="0 0 16 16"><circle cx="8" cy="8" r="8" fill="#111"/><path d="M4 3v10M4 4q4 0 3 3 1 4-3 4M13 4L9 7.500h3v4H9v-4M11 3l2 2" stroke="#e8e8e8" fill="none"/></svg>
                    <svg class="w-4 h-4" viewBox="0 0 16 16"><circle cx="8" cy="8" r="7" fill="#f6d42c" stroke="#4caf3c" stroke-width="2"/><path d="M8 4v8M4 8h8" stroke="#2c8c2c" stroke-width="2.500"/></svg>
                    <svg class="w-4 h-4" viewBox="0 0 16 16"><path d="M1 4h14M6 4L4 14M9 2L8 6h5l-2 8H7M8 10h4" stroke="#e01828" stroke-width="2" fill="none"/></svg>
                    <svg class="w-4 h-4" viewBox="0 0 16 16"><circle cx="5" cy="5" r="4.500" fill="#f6c63a"/><ellipse cx="9" cy="10" rx="7" ry="5" fill="#cfe4f8"/><circle cx="12" cy="8" r="3" fill="#72b2ec"/></svg>
                    <svg class="w-4 h-4" viewBox="0 0 16 16"><rect width="16" height="16" fill="#2c3826"/><path d="M2 8q5-6 12 0-6 6-12 0z" fill="none" stroke="#86c020" stroke-width="1.500"/><circle cx="8" cy="8" r="2" fill="#86c020"/></svg>
                    <svg class="w-4 h-4" viewBox="0 0 16 16"><rect width="16" height="16" rx="1" fill="#d2e8f4"/><rect x="2" y="2" width="8" height="12" fill="#3a92c8"/><path d="M3 4h5M3 7h5M3 10h4" stroke="#fff"/><path d="M10 5l4 5M14 5l-4 5" stroke="#2a7ab0"/></svg>
                    <svg class="w-4 h-4" viewBox="0 0 16 16"><path d="M4 4l8 8-4 3V1l4 3-8 8" stroke="#fff" stroke-width="1.500" fill="none"/></svg>
                    <svg class="w-4 h-4" viewBox="0 0 16 16"><path d="M8 2H2v12h7" stroke="#fff" stroke-width="1.500" fill="none"/><path d="M8 5h7v3q0 3-3 3t-4-3zM10 2v3M13 2v3M11.500 11v4" stroke="#fff" stroke-width="1.500" fill="#fff"/></svg>
                    <svg class="w-4 h-4" viewBox="0 0 16 16"><path d="M1 5.500h3l4-4v13l-4-4H1z" fill="#fff"/><path d="M10 5q2 3 0 6M12.500 3q3.500 5 0 10" stroke="#fff" fill="none"/></svg>
                    <svg class="w-4 h-4" viewBox="0 0 16 16"><path d="M1 14v-2M4.500 14v-4M8 14V8M11.500 14V6M15 14V3" stroke="#fff" stroke-width="2"/></svg>
                </div>
                <div class="w-[82px] ml-1 pb-0.5 text-center text-[13px] leading-[18px] font-['Open_Sans',sans-serif]">
                    <p>21:50</p>
                    <p>2020/10/25</p>
                </div>
                <button aria-label="Show desktop" class="w-3 h-full border border-[#5f87b4] bg-gradient-to-b from-[#8fa9c4] to-[#1d4474]"></button>
            </div>
        </div>
    </footer>

    <!-- Balloon of the communication center -->
    <div class="absolute right-[6px] bottom-[69px] w-[185px] h-[76px] pt-1.5 pl-4 pr-2 border border-black rounded-[14px] bg-[#ffffe1]">
        <div class="flex items-center">
            <svg class="w-4 h-4 -ml-1.5 mr-2"><use href="#info"/></svg>
            <h2 class="text-[13px] leading-[20px] font-bold">通讯中心</h2>
            <button aria-label="Close balloon" class="flex items-center justify-center w-4 h-4 ml-auto bg-[#f0f0f0] border border-[#888]"><svg class="w-2 h-2" viewBox="0 0 8 8"><path d="M0 0l8 8M8 0L0 8" stroke="#000" stroke-width="2"/></svg></button>
        </div>
        <p class="mt-0.5 whitespace-nowrap leading-[20px]">使软件保持最新的简单方法。</p>
        <a href="#" class="leading-4 text-[#0000ee] underline">单击此处。</a>
        <svg class="absolute right-[40px] top-[73px] w-[24px] h-[22px]" viewBox="0 0 24 22"><path d="M3 0l18 20V0" fill="#ffffe1"/><path d="M3 1l18 19V1" fill="none" stroke="#000"/></svg>
    </div>

    <!-- Modelling assistant window -->
    <section class="absolute left-[177px] right-[177px] top-[89px] bottom-[91px] flex flex-col px-1.5 pb-1.5 border border-[#5c6670] rounded-md bg-gradient-to-b from-[#f0ffff] from-4% via-[#2a3030] via-8% to-black to-20%">
        <div class="absolute inset-x-0 bottom-0 h-16 rounded-b-md bg-gradient-to-b from-transparent via-[#a9c4dc] via-50% to-white"></div>
        <div class="absolute inset-0 rounded-md border border-white/70"></div>
        <header class="relative flex items-center h-[29px] pb-1 shrink-0">
            <svg class="w-4 h-4 mr-1.5"><use href="#bridge"/></svg>
            <h2 class="text-xs">迅捷建模助手</h2>
            <div class="flex items-center gap-4 ml-5 mt-4 blur-[3px]">
                <div class="w-3 h-3 bg-[#b3b87a]"></div><div class="w-4 h-3 bg-[#8db2d8]"></div><div class="w-3 h-3 bg-[#b8cce0]"></div><div class="w-4 h-3 bg-[#87a9cc]"></div><div class="w-3 h-3 bg-[#b8b8a0]"></div><div class="w-7 h-2 bg-[#92aabf]"></div><div class="w-8 h-1 bg-[#c0d4dd]"></div><div class="w-1 h-1 ml-6 bg-[#92aabf]"></div><div class="w-4 h-2 bg-[#86989f]"></div>
            </div>
            <div class="flex self-start ml-auto -mr-0.5 h-[19px] border border-t-0 border-[#9aaab5] rounded-bl-md">
                <button aria-label="Minimize" class="w-7 flex items-center justify-center border-r border-[#9aaab5]"><svg class="w-3 h-[5px]" viewBox="0 0 12 5"><rect x=".5" y=".5" width="11" height="4" fill="#fff" stroke="#4c525c"/></svg></button>
                <button aria-label="Maximize" class="w-[27px] flex items-center justify-center border-r border-[#9aaab5]"><svg class="w-3 h-[10px]" viewBox="0 0 12 10"><rect x=".5" y=".5" width="11" height="9" fill="#fff" stroke="#4c525c"/><rect x="3.500" y="3.500" width="5" height="3" fill="none" stroke="#4c525c"/></svg></button>
                <button aria-label="Close" class="w-[47px] flex items-center justify-center"><svg class="w-3 h-[10px]"><use href="#closex"/></svg></button>
            </div>
        </header>
        <nav class="relative flex items-center h-[20px] shrink-0 pl-[7px] border-t border-[#8a949c] bg-gradient-to-b from-white to-[#d8def0] text-[#6d6d6d]">
            <button class="w-[82px] text-left">单元建模</button>
            <button class="w-[82px] text-left">截面建模</button>
            <button class="w-[74px] text-left">钢束建模</button>
            <button class="text-left">帮助</button>
        </nav>

        <!-- MDI area -->
        <div class="relative flex-1 border-t-2 border-l border-[#707070] bg-[#ababab]">

            <!-- Prestress dialog -->
            <section class="absolute left-[92px] right-[93px] top-[21px] bottom-[36px] flex flex-col px-1.5 pb-1.5 border border-[#2f3f55] rounded-md bg-gradient-to-b from-[#abc0da] to-[#b8cde6]">
                <header class="flex items-center h-[28px] shrink-0">
                    <svg class="w-4 h-4 mr-1"><use href="#bridge"/></svg>
                    <h2 class="text-xs">预应力建模</h2>
                    <button aria-label="Close" class="flex items-center justify-center self-start w-[45px] h-[18px] ml-auto border border-t-0 border-[#7388a3] rounded-b-md"><svg class="w-3 h-[10px]"><use href="#closex"/></svg></button>
                </header>
                <nav class="flex items-center h-[20px] shrink-0 pl-2 gap-[18px] border-t border-[#5d6f85] bg-gradient-to-b from-white to-[#d8def0] text-[#6d6d6d]">
                    <button>文件</button>
                    <button>编辑</button>
                </nav>
                <div class="flex-1 grid grid-cols-[112px_400fr_464fr] gap-4 pl-[9px] pr-[15px] pt-[15px] pb-[17px] border-t border-[#c0c4d0] bg-[#f0f0f0]">
                    <fieldset class="flex flex-col px-[7px] pb-1 border border-[#a0a0a0]">
                        <legend class="px-px leading-[14px]">钢束</legend>
                        <select size="28" aria-label="钢束" class="w-full h-full mt-[3px] pt-0.5 border-t-2 border-l-2 border-[#808080] bg-white text-[13px] overflow-hidden outline-none font-['Liberation_Mono',monospace]">
                            <option class="h-4 min-h-4 p-0 leading-4">B1-1</option>
                            <option class="h-4 min-h-4 p-0 leading-4">B2-1</option>
                            <option class="h-4 min-h-4 p-0 leading-4">B3-1</option>
                            <option class="h-4 min-h-4 p-0 leading-4">B4-1</option>
                            <option class="h-4 min-h-4 p-0 leading-4">B1-2</option>
                            <option class="h-4 min-h-4 p-0 leading-4">B2-2</option>
                            <option class="h-4 min-h-4 p-0 leading-4 bg-[linear-gradient(#3399ff,#3399ff)] text-white" selected>B3-2</option>
                            <option class="h-4 min-h-4 p-0 leading-4">B4-2</option>
                            <option class="h-4 min-h-4 p-0 leading-4">B1-3</option>
                            <option class="h-4 min-h-4 p-0 leading-4">B2-3</option>
                            <option class="h-4 min-h-4 p-0 leading-4">B3-3</option>
                            <option class="h-4 min-h-4 p-0 leading-4">B4-3</option>
                            <option class="h-4 min-h-4 p-0 leading-4">B1-4</option>
                            <option class="h-4 min-h-4 p-0 leading-4">B2-4</option>
                        </select>
                    </fieldset>

                    <div class="flex flex-col gap-[7px]">
                        <fieldset class="pl-[7px] pr-[14px] pb-1.5 border border-[#a0a0a0]">
                            <legend class="px-px leading-[14px]">竖弯</legend>
                            <div class="flex justify-between h-[232px] mt-[3px] border border-t-2 border-[#707070] border-r-white border-b-white overflow-hidden">
                                <table class="table-fixed border-collapse self-start w-[333px] text-right text-[13px] font-['Liberation_Mono',monospace]">
                                    <colgroup><col class="w-[53px]"><col class="w-[100px]"><col class="w-[100px]"><col class="w-[80px]"></colgroup>
                                    <thead>
                                        <tr class="h-[21px] text-left"><th class="p-0 pl-0.5 pb-0.5 border-r border-b border-black font-normal text-base leading-[18px] font-['Noto_Sans_CJK_SC',sans-serif]">序号</th><th class="p-0 pl-0.5 border-r border-b border-black font-normal">X(cm)</th><th class="p-0 pl-0.5 border-r border-b border-black font-normal">Y(cm)</th><th class="p-0 pl-0.5 border-r border-b border-black font-normal">R(cm)</th></tr>
                                    </thead>
                                    <tbody id="verticalRows"></tbody>
                                </table>
                                <div class="flex flex-col items-center w-[17px] pt-1.5">
                                    <svg class="w-2 h-1 rotate-180"><use href="#down"/></svg>
                                    <div class="w-[15px] h-[15px] mt-2 border border-[#999] bg-gradient-to-r from-white to-[#ccc]"></div>
                                </div>
                            </div>
                        </fieldset>
                        <fieldset class="flex-1 flex flex-col pl-[7px] pr-[14px] pb-2 border border-[#a0a0a0]">
                            <legend class="px-px leading-[14px]">平弯(此处右键快捷菜单)</legend>
                            <div class="flex-1 mt-[3px] border border-t-2 border-[#707070] border-r-white border-b-white">
                                <table class="table-fixed border-collapse w-[333px] text-right text-[13px] font-['Liberation_Mono',monospace]">
                                    <colgroup><col class="w-[53px]"><col class="w-[100px]"><col class="w-[100px]"><col class="w-[80px]"></colgroup>
                                    <thead>
                                        <tr class="h-[21px] text-left"><th class="p-0 pl-0.5 pb-0.5 border-r border-b border-black font-normal text-base leading-[18px] font-['Noto_Sans_CJK_SC',sans-serif]">序号</th><th class="p-0 pl-0.5 border-r border-b border-black font-normal">X(cm)</th><th class="p-0 pl-0.5 border-r border-b border-black font-normal">Y(cm)</th><th class="p-0 pl-0.5 border-r border-b border-black font-normal">R(cm)</th></tr>
                                    </thead>
                                    <tbody id="planRows"></tbody>
                                </table>
                            </div>
                        </fieldset>
                    </div>

                    <div class="flex flex-col gap-[14px]">
                        <div class="flex gap-[9px]">
                            <fieldset class="flex-1 pl-[7px] pr-2 pb-1.5 border border-[#a0a0a0]">
                                <legend class="px-px leading-[14px]">参数</legend>
                                <div class="h-[232px] mt-[3px] border border-t-2 border-[#707070] border-r-white border-b-white">
                                    <table class="table-fixed border-collapse w-[220px] text-base leading-[18px] font-['Noto_Sans_CJK_SC',sans-serif]">
                                        <colgroup><col class="w-[100px]"><col class="w-[120px]"></colgroup>
                                        <tbody>
                                            <tr class="h-[21px]"><td class="p-0 border-r border-b border-black"></td><td class="p-0 pl-[3px] pb-0.5 border-r border-b border-black">参数</td></tr>
                                            <tr class="h-[21px]"><td class="p-0 pl-[3px] pb-0.5 border-r border-b border-black">钢束名称</td><td class="p-0 pl-[3px] border-r border-b border-black bg-white text-[13px] font-['Liberation_Mono',monospace]">B3-4</td></tr>
                                            <tr class="h-[21px]"><td class="p-0 pl-[3px] pb-0.5 border-r border-b border-black">钢束根数</td><td class="p-0 pr-[3px] border-r border-b border-black bg-white text-right text-[13px] font-['Liberation_Mono',monospace]">1</td></tr>
                                            <tr class="h-[21px]"><td class="p-0 pl-[3px] pb-0.5 border-r border-b border-black">相关单元</td><td class="p-0 pr-[3px] border-r border-b border-black bg-white text-right text-[13px] font-['Liberation_Mono',monospace]">1to10</td></tr>
                                            <tr class="h-[21px]"><td class="p-0 pl-[3px] pb-0.5 border-r border-b border-black">荷载组名</td><td class="p-0 pl-[3px] pb-0.5 border-r border-b border-black bg-white">钢束</td></tr>
                                            <tr class="h-[21px]"><td class="p-0 pl-[3px] pb-0.5 border-r border-b border-black">控制应力</td><td class="p-0 pr-[3px] border-r border-b border-black bg-white text-right text-[13px] font-['Liberation_Mono',monospace]">1395</td></tr>
                                        </tbody>
                                    </table>
                                </div>
                            </fieldset>
                            <div class="flex flex-col gap-[14px] w-[160px] pt-[9px]">
                                <fieldset class="flex flex-col gap-4 h-[112px] pl-[7px] pt-[11px] border border-[#a0a0a0]">
                                    <legend class="px-px leading-[14px]">张拉方式</legend>
                                    <label class="flex items-center gap-1 h-4 ml-[17px]"><input type="radio" name="tension" class="appearance-none w-3 h-3 rounded-full border border-[#888] border-r-[#ddd] border-b-[#ddd] bg-white">左端张拉</label>
                                    <label class="flex items-center gap-1 h-4 ml-[17px]"><input type="radio" name="tension" class="appearance-none w-3 h-3 rounded-full border border-[#888] border-r-[#ddd] border-b-[#ddd] bg-white">右端张拉</label>
                                    <label class="flex items-center gap-1 h-4 ml-[17px]"><input type="radio" name="tension" checked class="appearance-none w-3 h-3 rounded-full border border-[#888] border-r-[#ddd] border-b-[#ddd] bg-white checked:bg-[radial-gradient(#000_2px,#fff_3px)]">两端张拉</label>
                                </fieldset>
                                <div class="flex-1 flex flex-col gap-[9px] pl-[15px] pt-[10px] border border-[#a0a0a0]">
                                    <label class="flex justify-between h-[23px] w-32 text-[13px] leading-4 whitespace-pre font-['Liberation_Mono',monospace]">mu =<input type="text" value="0.25" class="w-[88px] h-[23px] pb-1 pl-px border-t-2 border-l-2 border-[#808080] bg-white text-[11px]"></label>
                                    <label class="flex justify-between h-[23px] w-32 text-[13px] leading-4 whitespace-pre font-['Liberation_Mono',monospace]"> K =<input type="text" value="0.0015" class="w-[88px] h-[23px] pb-1 pl-px border-t-2 border-l-2 border-[#808080] bg-white text-[11px]"></label>
                                    <div class="flex justify-between w-32 h-5 mt-2">
                                        <label for="material" class="text-[14px] leading-[14px]">材料</label>
                                        <div class="flex items-center w-[88px] h-5 border-t-2 border-l-2 border-[#808080] bg-white">
                                            <select id="material" class="appearance-none flex-1 min-w-0 pl-0.5 text-[11px] font-['Liberation_Mono',monospace]"><option>15-15</option></select>
                                            <span class="flex items-center justify-center w-[17px] h-full bg-[#f0f0f0] border-r-2 border-b-2 border-[#808080]"><svg class="w-2 h-[5px]"><use href="#down"/></svg></span>
                                        </div>
                                    </div>
                                </div>
                            </div>
                        </div>

                        <div class="flex-1 flex flex-col justify-between pl-[22px] pr-4 pt-[34px] pb-1 border border-[#a0a0a0]">
                            <div class="flex">
                                <div class="flex flex-col gap-[23px] pl-[33px]">
                                    <button class="w-[65px] h-[25px] border border-t-[#555] border-l-white border-r-2 border-b-2 border-r-[#666] border-b-[#666]">增加</button>
                                    <button class="w-[65px] h-[25px] border border-white border-r-2 border-b-2 border-r-[#777] border-b-[#777]">修改</button>
                                    <button class="w-[65px] h-[25px] border border-white border-r-2 border-b-2 border-r-[#777] border-b-[#777]">删除</button>
                                </div>
                                <div class="flex flex-col gap-4 ml-[72px] -mt-2">
                                    <label class="flex items-center gap-1 h-4 whitespace-nowrap"><input type="radio" name="mode" checked class="appearance-none w-3 h-3 rounded-full border border-[#888] border-r-[#ddd] border-b-[#ddd] bg-white checked:bg-[radial-gradient(#000_2px,#fff_3px)]">钢束按直线方式建模</label>
                                    <label class="flex items-center gap-1 h-4 whitespace-nowrap"><input type="radio" name="mode" class="appearance-none w-3 h-3 rounded-full border border-[#888] border-r-[#ddd] border-b-[#ddd] bg-white">钢束按单元方式建模(现浇弯桥)</label>
                                    <label class="flex items-center gap-1 h-4 whitespace-nowrap"><input type="radio" name="mode" class="appearance-none w-3 h-3 rounded-full border border-[#888] border-r-[#ddd] border-b-[#ddd] bg-white">钢束按输入单元相关方式建模（悬浇弯桥）</label>
                                    <button class="w-[73px] h-[25px] mt-2 ml-[79px] text-[11px] font-['Liberation_Mono',monospace] border border-white border-r-2 border-b-2 border-r-[#777] border-b-[#777]">MCT</button>
                                </div>
                            </div>
                            <div class="leading-6">
                                <p class="h-6 whitespace-nowrap">注：立面颜色洋红，平面颜色绿色，平面轴线颜色黄色，图层名称<span class="text-[11px] leading-none font-['Liberation_Mono',monospace]">PMZX</span>，保存</p>
                                <p class="h-6 pl-6"><span class="text-[11px] leading-none font-['Liberation_Mono',monospace]">DXF</span>文件最好是<span class="text-[11px] leading-none font-['Liberation_Mono',monospace]">04</span>版本</p>
                            </div>
                        </div>
                    </div>
                </div>
            </section>
        </div>

        <footer class="relative flex gap-[3px] h-[27px] shrink-0 pt-[3px] pb-px bg-[#f0f0f0] border-t border-white text-[13px] leading-5">
            <div class="w-[133px] pl-[7px] border-t border-r border-[#a0a0a0] border-r-white">欢迎使用迅捷建模</div>
            <div class="w-[198px] pl-[7px] border-t border-l border-r border-[#a0a0a0] border-r-white">未认证用户</div>
            <div class="w-[130px] pl-[7px] border-t border-l border-r border-[#a0a0a0] border-r-white">设计版</div>
            <div class="w-[266px] pl-[7px] border-t border-l border-r border-[#a0a0a0] border-r-white">购买及使用 <span class="font-['Liberation_Mono',monospace] text-xs">QQ:2957145388</span></div>
            <svg class="w-3 h-3 ml-auto mt-2.5" viewBox="0 0 12 12"><path d="M0 12L12 0M4 12l8-8M8 12l4-4" stroke="#999" stroke-width="1.500"/></svg>
        </footer>
    </section>

    <!-- Message box -->
    <section class="absolute left-[707px] top-[363px] w-[191px] px-1.5 pb-1.5 border border-[#26384d] rounded-md bg-gradient-to-b from-[#c3dbf3] via-[#cfe4f6] to-[#a9cdef] shadow-lg">
        <header class="flex items-center h-[28px]">
            <h3 class="text-xs">添加</h3>
            <button aria-label="Close" class="flex items-center justify-center self-start w-[47px] h-[18px] ml-auto border border-t-0 border-[#5a1a18] rounded-b-md bg-gradient-to-b from-[#dba097] via-[#c8402c] to-[#c9543c]"><svg class="w-3 h-[10px]"><use href="#closex"/></svg></button>
        </header>
        <div class="flex flex-col border border-[#4d6a8c] bg-white">
            <div class="flex items-center h-[92px] pl-[25px] gap-2"><svg class="w-8 h-8"><use href="#info"/></svg><p class="leading-4">添加数据成功</p></div>
            <div class="flex justify-end h-[55px] pt-3 pr-2 bg-[#f0f0f0]">
                <button class="w-[88px] h-[30px] border border-[#555] border-l-white border-r-2 border-b-2 border-r-[#666] border-b-[#666]">确定</button>
            </div>
        </div>
        <svg class="absolute left-[95px] top-[162px] w-3 h-[19px]" viewBox="0 0 12 19"><path d="M.5.5v15l3.500-3.500 2.500 6 2.500-1-2.500-6h5z" fill="#fff" stroke="#000"/></svg>
    </section>

    <!-- Floating swatch -->
    <div class="absolute right-[303px] top-[9px] w-7 h-7 border border-[#6c7d8c] bg-[#a5f5fd]"></div>

    <!-- Screen recorder -->
    <div class="absolute right-[11px] top-[61px] flex items-center">
        <div class="relative z-10 flex items-center justify-center w-[78px] h-[78px] rounded-full border-4 border-white bg-[radial-gradient(circle_at_15%_65%,#fb8d88,#ee3a36_45%,#e0211f)] text-white text-[14px] font-['Open_Sans',sans-serif]">00:03:36</div>
        <div class="flex items-center h-[38px] -ml-10 pl-[50px] pr-4 rounded-full bg-white">
            <button aria-label="Pause" class="flex gap-2 mr-[15px]"><span class="w-[3px] h-5 bg-[#4a4a4a]"></span><span class="w-[3px] h-5 bg-[#4a4a4a]"></span></button>
            <button aria-label="Stop" class="w-3.5 h-3.5 mr-[15px] rounded-xs bg-[#aaa]"></button>
            <button aria-label="Draw"><svg class="w-[15px] h-[15px]" viewBox="0 0 16 16"><path d="M12 1l3 3-9 8-3-3zM2 10l3 3-4 2z" fill="#4a4a4a"/></svg></button>
        </div>
    </div>

    <script>
        const verticalPoints = [
            ["4800", "-137", "0"],
            ["5070.506375", "-180", "800"],
            ["5400", "-180", "0"],
            ["5550", "-180", "800"],
            ["5700", "-187.5", "800"],
            ["6900", "-187.5", "0"],
            ["7800", "-187.5", "0"],
            ["7950", "-180", "800"],
            ["8100", "-180", "800"],
            ["8426.770833", "-180", "0"]
        ];
        const planPoints = [
            ["4800", "-85", "0"],
            ["8700", "-85", "0"]
        ];

        function fillRows(id, points) {
            document.getElementById(id).innerHTML = points.map((point, i) => `
                <tr class="h-[21px]">
                    <td class="p-0 pr-[3px] border-r border-b border-black">${i + 1}</td>
                    ${point.map(value => `<td class="p-0 pr-[3px] border-r border-b border-black bg-white">${value}</td>`).join("")}
                </tr>`).join("");
        }

        fillRows("verticalRows", verticalPoints);
        fillRows("planRows", planPoints);
    </script>
</body>
</html>
